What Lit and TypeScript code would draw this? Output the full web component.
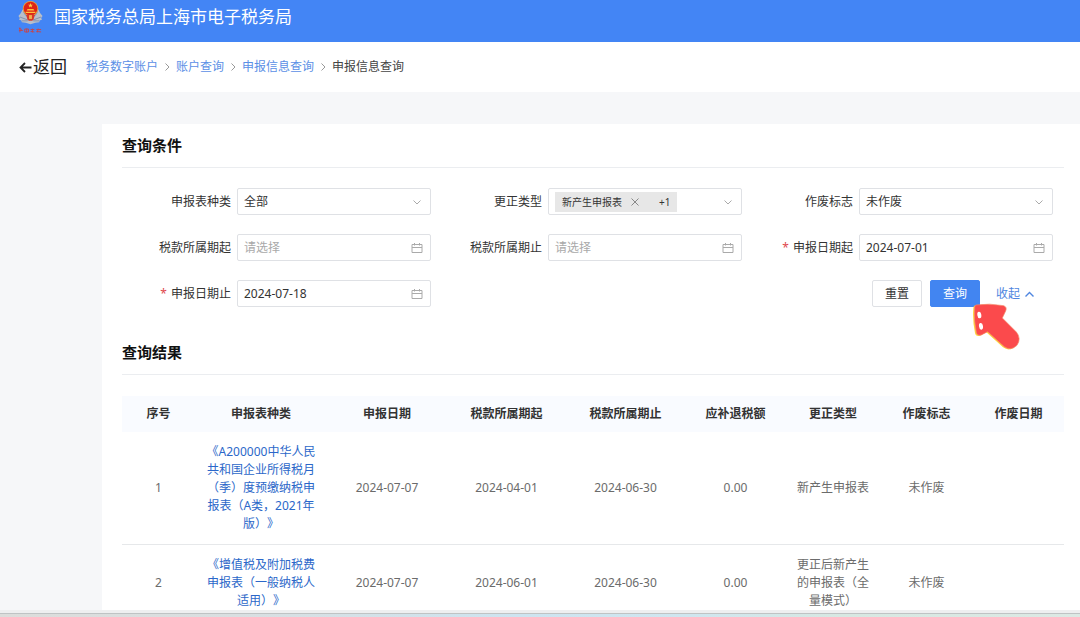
import { LitElement, html, css, svg, nothing } from "lit";
import { customElement } from "lit/decorators.js";

interface Field {
  id: string;
  label: string;
  kind: "select" | "date" | "tags";
  value?: string;
  required?: boolean;
}

const FIELDS: Field[] = [
  { id: "form-type", label: "申报表种类", kind: "select", value: "全部" },
  { id: "fix-type", label: "更正类型", kind: "tags", value: "新产生申报表" },
  { id: "void-flag", label: "作废标志", kind: "select", value: "未作废" },
  { id: "period-from", label: "税款所属期起", kind: "date" },
  { id: "period-to", label: "税款所属期止", kind: "date" },
  { id: "filed-from", label: "申报日期起", kind: "date", value: "2024-07-01", required: true },
  { id: "filed-to", label: "申报日期止", kind: "date", value: "2024-07-18", required: true },
];

const COLUMNS = [
  { title: "序号", cls: "c1" },
  { title: "申报表种类", cls: "c2" },
  { title: "申报日期", cls: "c3" },
  { title: "税款所属期起", cls: "c4" },
  { title: "税款所属期止", cls: "c4" },
  { title: "应补退税额", cls: "c6" },
  { title: "更正类型", cls: "c7" },
  { title: "作废标志", cls: "c8" },
  { title: "作废日期", cls: "c9" },
];

const ROWS = [
  ["1", "《A200000中华人民共和国企业所得税月（季）度预缴纳税申报表（A类，2021年版）》", "2024-07-07", "2024-04-01", "2024-06-30", "0.00", "新产生申报表", "未作废", ""],
  ["2", "《增值税及附加税费申报表（一般纳税人适用）》", "2024-07-07", "2024-06-01", "2024-06-30", "0.00", "更正后新产生的申报表（全量模式）", "未作废", ""],
];

const TRAIL = ["税务数字账户", "账户查询", "申报信息查询"];

const emblem = html`<svg class="emblem" viewBox="0 0 28 34" aria-hidden="true">
  <path d="M1.500 16 Q4 14 6 9 Q7 17 14 18 Q21 17 22 9 Q24 14 26.500 16 L25 18 L26 19.500 L23.500 20.500 L23 22.500 L19 23 L14 24.500 L9 23 L5 22.500 L4.500 20.500 L2 19.500 L3 18 Z" fill="#b9bfca"/>
  <path d="M3 17 L11 20 M5 21 L11 21 M25 17 L17 20 M23 21 L17 21" stroke="#7484a5" stroke-width=".8"/>
  <circle cx="14" cy="8.500" r="8" fill="#e9a13b"/>
  <circle cx="14" cy="8.300" r="7.100" fill="#dd2417"/>
  <path d="M14 2.500 L14.700 4.300 L16.600 4.300 L15.100 5.400 L15.600 7.200 L14 6.200 L12.400 7.200 L12.900 5.400 L11.400 4.300 L13.300 4.300 Z" fill="#ffd24a"/>
  <path d="M9 11.500 H19 V12.800 H9 Z M11 8.800 H17 L18 10.300 H10 Z" fill="#ffc13d"/>
  <path d="M9.500 15 Q14 13.500 18.500 15 L17 20 Q14 22 11 20 Z" fill="#d8392a"/>
  <path d="M12.500 15 H15.500 V19 H12.500 Z" fill="#f0b44c"/>
  <path d="M2 28.500 L5 30 M3 28 V33 M2 31 H6 M8 29.500 H12 V32.500 H8 Z M10 29 V33 M14 30 H18 M16 29 V33 M14 32 L18 32.500 M20 30 H25 M22 29 L21 33 M20 32 L25 32.500" stroke="#c4474f" stroke-width="1" fill="none"/>
</svg>`;

const down = html`<svg class="mark" viewBox="0 0 12 12" aria-hidden="true"><path d="M2.500 4.500 L6 8 L9.500 4.500"/></svg>`;
const calendar = html`<svg class="mark" viewBox="0 0 12 12" aria-hidden="true"><path d="M1 2.500 H11 V10.500 H1 Z M1 5.500 H11 M3.500 1 V3.500 M8.500 1 V3.500"/></svg>`;

@customElement("app-root")
export class AppRoot extends LitElement {
  static styles = css`
    :host {
      display: flex;
      flex-direction: column;
      height: 100vh;
      overflow: hidden;
      background: #f6f7f9;
      color: #333;
      font: 12px/18px "Noto Sans", "Noto Sans CJK SC", sans-serif;
      text-spacing-trim: space-all;
    }
    * { box-sizing: border-box; }
    a { color: inherit; text-decoration: none; }
    button, input, select { font: inherit; color: inherit; margin: 0; }
    svg { display: block; fill: none; }
    h1, h2 { margin: 0; }

    .top {
      flex: none;
      display: flex;
      align-items: center;
      gap: 10px;
      height: 42px;
      padding: 0 17px 8px;
      background: #4385f5;
      color: #fff;
    }
    .emblem { width: 27px; height: 34px; }
    .title { font-size: 17px; line-height: 24px; font-weight: 400; }

    .bar {
      flex: none;
      display: flex;
      align-items: center;
      gap: 19px;
      height: 50px;
      padding: 0 19px;
      background: #fff;
    }
    .back {
      display: flex;
      align-items: center;
      gap: 1px;
      padding: 0;
      border: 0;
      background: none;
      font-size: 17px;
      line-height: 24px;
      color: #222;
      cursor: pointer;
    }
    .back svg { width: 13px; height: 13px; stroke: #222; stroke-width: 1.8; }
    .trail { display: flex; align-items: center; color: #5b8fe6; }
    .trail svg { width: 18px; height: 10px; stroke: #999; }
    .here { color: #444; }

    .main { flex: 1; min-height: 0; overflow: hidden; padding: 32px 0 0 102px; }
    .card { min-height: 100%; padding: 0 16px 0 20px; background: #fff; }
    .heading {
      padding: 10px 0;
      border-bottom: 1px solid #ebedf0;
      font-size: 15px;
      line-height: 23px;
      color: #111;
    }

    .form {
      display: grid;
      grid-template-columns: repeat(3, 1fr);
      row-gap: 19px;
      margin: 0 11px 0 -2px;
      padding: 20px 0 24px;
    }
    .field { display: flex; align-items: center; gap: 6px; }
    .label { flex: 0 0 111px; text-align: right; white-space: nowrap; }
    .req { margin-right: 4px; color: #e0484c; }
    .control { flex: 1; min-width: 0; display: flex; position: relative; }
    .box {
      width: 100%;
      height: 27px;
      padding: 0 28px 0 6px;
      border: 1px solid #dfe1e5;
      border-radius: 2px;
      background: #fff;
      appearance: none;
      outline: 0;
    }
    .box::placeholder { color: #a9a9a9; opacity: 1; }
    .mark {
      position: absolute;
      right: 8px;
      top: 8px;
      width: 12px;
      height: 12px;
      stroke: #aaa;
      pointer-events: none;
    }
    .tags { display: flex; align-items: center; font-size: 10px; }
    .tag {
      display: flex;
      align-items: center;
      gap: 8px;
      height: 20px;
      padding: 0 7px;
      background: #e7e7e7;
    }
    .more { padding-left: 12px; }
    .drop { padding: 0; border: 0; background: none; cursor: pointer; }
    .drop svg { width: 10px; height: 10px; stroke: #888; }

    .actions { grid-column: 2 / 4; display: flex; justify-content: flex-end; gap: 8px; padding-right: 18px; }
    .btn {
      width: 50px;
      height: 27px;
      padding: 0;
      border: 1px solid #dfe1e5;
      border-radius: 2px;
      background: #fff;
      cursor: pointer;
    }
    .primary { border-color: #4285f1; background: #4285f1; color: #fff; }
    .spot { position: relative; }
    .pointer { position: absolute; left: 43px; top: 23px; width: 48px; height: 48px; z-index: 1; pointer-events: none; }
    .fold {
      display: flex;
      align-items: center;
      gap: 4px;
      margin-left: 8px;
      padding: 0;
      border: 0;
      background: none;
      color: #4f86e0;
      cursor: pointer;
    }
    .fold svg { width: 11px; height: 10px; stroke: #4f86e0; stroke-width: 1.4; }

    .table { width: 100%; margin-top: 21px; table-layout: fixed; border-collapse: separate; border-spacing: 0; text-align: center; }
    .table th { height: 36px; padding: 0; background: #f9fbff; font-weight: 700; white-space: nowrap; }
    .table td { padding: 11px 10px; border-bottom: 1px solid #e6e8ea; color: #6b6b6b; }
    .table a { color: #2b67c9; }
    .c1 { width: 73px; }
    .c2 { width: 132px; }
    .c3 { width: 120px; }
    .c4 { width: 119px; }
    .c6 { width: 101px; }
    .c7 { width: 94px; }
    .c8 { width: 93px; }
    .c9 { width: 91px; }

    .edge {
      flex: none;
      height: 7px;
      border-top: 3px solid #eeeff0;
      background: linear-gradient(#bfc3c4, #bfc3c4) top / 100% 1px no-repeat,
        linear-gradient(90deg, #dcdddb 0%, #d9dfe1 22%, #cde4f0 48%, #cfe6ef 64%, #d7e8e2 78%, #dce9e4 100%);
    }
  `;

  private control(f: Field) {
    if (f.kind === "select") {
      return html`<select class="box" id=${f.id}><option>${f.value}</option></select>${down}`;
    }
    if (f.kind === "date") {
      return html`<input class="box" id=${f.id} type="text" placeholder="请选择" .value=${f.value ?? ""} />${calendar}`;
    }
    return html`<div class="box tags" role="group" aria-labelledby=${f.id}>
        <span class="tag">${f.value}
          <button class="drop" type="button" aria-label="移除">
            <svg viewBox="0 0 10 10"><path d="M1.500 1.500 L8.500 8.500 M8.500 1.500 L1.500 8.500"/></svg>
          </button></span>
        <span class="tag more">+1</span>
      </div>${down}`;
  }

  private field(f: Field) {
    const text = html`${f.required ? html`<span class="req">*</span>` : nothing}${f.label}`;
    return html`<div class="field">
      ${f.kind === "tags"
        ? html`<span class="label" id=${f.id}>${text}</span>`
        : html`<label class="label" for=${f.id}>${text}</label>`}
      <div class="control">${this.control(f)}</div>
    </div>`;
  }

  render() {
    const arrow = "M8 6 Q50 0 92 8 Q103 12 98 24 L88 45 L130 87 Q146 106 132 127 Q114 145 94 131 L44 86 L25 96 Q12 99 10 88 Q2 50 5 14 Q5 8 8 6 Z";
    return html`
      <header class="top">${emblem}<h1 class="title">国家税务总局上海市电子税务局</h1></header>
      <div class="bar">
        <button class="back" type="button">
          <svg viewBox="0 0 13 13" aria-hidden="true"><path d="M12.500 6.500 H1.500 M6 2 L1.500 6.500 L6 11"/></svg>返回
        </button>
        <nav class="trail">
          ${TRAIL.map((t) => html`<a href="#">${t}</a><svg viewBox="0 0 18 10" aria-hidden="true"><path d="M7.500 1.500 L11 5 L7.500 8.500"/></svg>`)}
          <span class="here">申报信息查询</span>
        </nav>
      </div>
      <main class="main">
        <div class="card">
          <h2 class="heading">查询条件</h2>
          <form class="form">
            ${FIELDS.map((f) => this.field(f))}
            <div class="actions">
              <button class="btn" type="button">重置</button>
              <div class="spot">
                <button class="btn primary" type="button">查询</button>
                <svg class="pointer" viewBox="0 0 144 144" aria-hidden="true">
                  ${svg`<path d=${arrow} transform="translate(-4 2)" fill="#ffd23c"/>
                  <path d=${arrow} fill="#fb4a4c" stroke="#f58a6a" stroke-width="2"/>`}
                  <ellipse cx="19" cy="36" rx="6" ry="10" fill="#fff" transform="rotate(-8 19 36)"/>
                  <ellipse cx="24" cy="70" rx="6" ry="10" fill="#fff" transform="rotate(-8 24 70)"/>
                </svg>
              </div>
              <button class="fold" type="button">收起
                <svg viewBox="0 0 11 10" aria-hidden="true"><path d="M1.500 7.500 L5.500 3.500 L9.500 7.500"/></svg>
              </button>
            </div>
          </form>
          <h2 class="heading">查询结果</h2>
          <table class="table">
            <thead><tr>${COLUMNS.map((c) => html`<th class=${c.cls} scope="col">${c.title}</th>`)}</tr></thead>
            <tbody>
              ${ROWS.map((r) => html`<tr>${r.map((v, i) => html`<td>${i === 1 ? html`<a href="#">${v}</a>` : v}</td>`)}</tr>`)}
            </tbody>
          </table>
        </div>
      </main>
      <footer class="edge"></footer>
    `;
  }
}
